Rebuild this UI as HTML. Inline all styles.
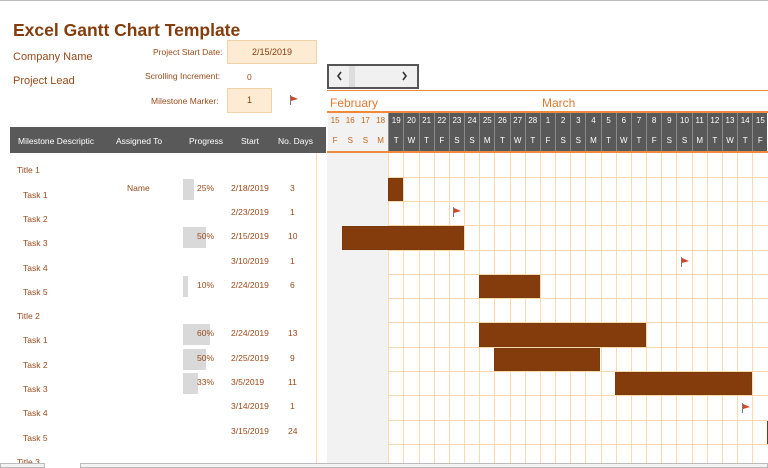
<!DOCTYPE html>
<html><head><meta charset="utf-8"><style>
*{margin:0;padding:0;box-sizing:border-box}
body{width:768px;height:468px;overflow:hidden;background:#fff;font-family:"Liberation Sans",sans-serif;position:relative;color:#9a4a1a}
.a{position:absolute;white-space:nowrap}
.lbl{font-size:8.5px;color:#9a4a1a}
.dk{background:#595959;color:#fff}
.bar{position:absolute;background:#843c0c;border:1px solid #7a3a10}
.pg{position:absolute;background:#d9d9d9}
.t{font-size:8.5px;color:#9a4a1a}
</style></head><body>
<div class="a" style="left:0;top:0;width:768px;height:1px;background:#bbb"></div>
<div class="a" style="left:13px;top:20px;font-size:17.5px;font-weight:bold;color:#843c0c">Excel Gantt Chart Template</div>
<div class="a" style="left:13px;top:51px;font-size:11px">Company Name</div>
<div class="a" style="left:13px;top:75px;font-size:11px">Project Lead</div>
<div class="a lbl" style="left:153px;top:47px">Project Start Date:</div>
<div class="a lbl" style="left:145px;top:71px">Scrolling Increment:</div>
<div class="a lbl" style="left:151px;top:96px">Milestone Marker:</div>
<div class="a" style="left:227px;top:40px;width:90px;height:24px;background:#fdebd3;border:1px solid #f0d2a8;font-size:9px;text-align:center;line-height:22px;color:#843c0c">2/15/2019</div>
<div class="a" style="left:247px;top:72px;font-size:8.5px">0</div>
<div class="a" style="left:227px;top:88px;width:45px;height:25px;background:#fdebd3;border:1px solid #f0d2a8;font-size:9px;text-align:center;line-height:23px;color:#843c0c">1</div>
<svg class="a" style="left:289px;top:95px" width="10" height="10"><line x1="1.5" y1="0" x2="1.5" y2="10" stroke="#777" stroke-width="1"/><path d="M2 1 L9 4 L2 6Z" fill="#d04a2a"/></svg>
<div class="a" style="left:327px;top:64px;width:92px;height:25px;border:2px solid #555;background:#f0f0f0"></div>
<div class="a" style="left:349px;top:66px;width:6px;height:21px;background:#ddd"></div>
<svg class="a" style="left:336px;top:71px" width="80" height="10"><path d="M5 1 L2 5 L5 9" fill="none" stroke="#333" stroke-width="1.6"/><path d="M67 1 L70 5 L67 9" fill="none" stroke="#333" stroke-width="1.6"/></svg>
<div class="a" style="left:327px;top:90px;width:441px;height:1px;background:#f08a3a"></div>
<div class="a" style="left:330px;top:96px;font-size:12px;color:#e07a30">February</div>
<div class="a" style="left:542px;top:96px;font-size:12px;color:#e07a30">March</div>
<div class="a dk" style="left:10px;top:127px;width:316px;height:26px"></div>
<div class="a" style="left:18px;top:136px;font-size:8.5px;color:#fff">Milestone Descriptic</div>
<div class="a" style="left:116px;top:136px;font-size:8.5px;color:#fff">Assigned To</div>
<div class="a" style="left:189px;top:136px;font-size:8.5px;color:#fff">Progress</div>
<div class="a" style="left:241px;top:136px;font-size:8.5px;color:#fff">Start</div>
<div class="a" style="left:278px;top:136px;font-size:8.5px;color:#fff">No. Days</div>
<div class="a" style="left:316px;top:153px;width:1px;height:315px;background:#fbd9a8"></div>
<div class="a" style="left:327px;top:153px;width:61px;height:315px;background:#f2f2f2"></div>
<div id="g"></div>
<div class="a" style="left:327px;top:111px;width:441px;height:2px;background:#f08a3a"></div>
<div class="a" style="left:327px;top:151px;width:441px;height:2px;background:#f08a3a"></div>
<div id="r"></div>
<div class="a" style="left:0;top:463px;width:45px;height:5px;border:1px solid #bbb;background:#f3f3f3"></div>
<div class="a" style="left:80px;top:463px;width:688px;height:5px;border:1px solid #bbb;background:#f3f3f3"></div>
<script>
var d=[15,16,17,18,19,20,21,22,23,24,25,26,27,28,1,2,3,4,5,6,7,8,9,10,11,12,13,14,15];
var w=['F','S','S','M','T','W','T','F','S','S','M','T','W','T','F','S','S','M','T','W','T','F','S','S','M','T','W','T','F'];
var cw=15.17,x0=327.5,h='';
var rt=[152,176.5,201,225,249.5,273.5,298,322,346.5,371,395,419.5,443.5,468];
for(var i=0;i<29;i++){var x=x0+i*cw;
 if(i<4){h+='<div class="a" style="left:'+x+'px;top:113px;width:'+cw+'px;height:38px;background:#f2f2f2;color:#c0651a;font-size:8px;text-align:center"><div style="margin-top:3px">'+d[i]+'</div><div style="margin-top:11px">'+w[i]+'</div></div>';}
 else{h+='<div class="a dk" style="left:'+x+'px;top:113px;width:'+cw+'px;height:38px;border-left:1px solid #8a8a8a;font-size:8px;text-align:center"><div style="margin-top:3px">'+d[i]+'</div><div style="margin-top:11px">'+w[i]+'</div></div>';
 h+='<div class="a" style="left:'+x+'px;top:153px;width:1px;height:315px;background:#fbd9a8"></div>';}}
for(var j=1;j<13;j++)h+='<div class="a" style="left:388px;top:'+rt[j]+'px;width:380px;height:1px;background:#fbd9a8"></div>';
document.getElementById('g').innerHTML=h;
var rows=[['Title 1',17],['Task 1',23,'Name',25,'2/18/2019','3'],['Task 2',23,'',0,'2/23/2019','1'],['Task 3',23,'',50,'2/15/2019','10'],['Task 4',23,'',-1,'3/10/2019','1'],['Task 5',23,'',10,'2/24/2019','6'],['Title 2',17],['Task 1',23,'',60,'2/24/2019','13'],['Task 2',23,'',50,'2/25/2019','9'],['Task 3',23,'',33,'3/5/2019','11'],['Task 4',23,'',-1,'3/14/2019','1'],['Task 5',23,'',-1,'3/15/2019','24'],['Title 3',17]];
var s='';
for(var k=0;k<rows.length;k++){var r=rows[k],y=rt[k],cy=y+12;
 s+='<div class="a t" style="left:'+r[1]+'px;top:'+(cy+1)+'px">'+r[0]+'</div>';
 if(r.length>2){ if(r[2])s+='<div class="a t" style="left:127px;top:'+(cy-6)+'px">'+r[2]+'</div>';
  if(r[3]>0){s+='<div class="pg" style="left:183px;top:'+(y+2)+'px;width:'+(Math.max(4,r[3]*0.45))+'px;height:21px"></div>';s+='<div class="a t" style="left:197px;top:'+(cy-6)+'px">'+r[3]+'%</div>';}
  s+='<div class="a t" style="left:231px;top:'+(cy-6)+'px">'+r[4]+'</div>';
  s+='<div class="a t" style="left:'+(r[5].length>1?288:290)+'px;top:'+(cy-6)+'px">'+r[5]+'</div>';}}
var bars=[[1,388,403],[3,342,464],[5,479,540],[7,479,646],[8,494,600],[9,615,752],[11,767,769]];
bars.forEach(function(b){s+='<div class="bar" style="left:'+b[1]+'px;top:'+(rt[b[0]]+1)+'px;width:'+(b[2]-b[1])+'px;height:'+(rt[b[0]+1]-rt[b[0]]-1)+'px"></div>'});
[[452,207],[680,257],[741,403]].forEach(function(f){s+='<svg class="a" style="left:'+f[0]+'px;top:'+f[1]+'px" width="10" height="10"><line x1="1.5" y1="0" x2="1.5" y2="10" stroke="#777"/><path d="M2 1 L9 4 L2 6Z" fill="#d04a2a"/></svg>'});
document.getElementById('r').innerHTML=s;
</script>
</body></html>
